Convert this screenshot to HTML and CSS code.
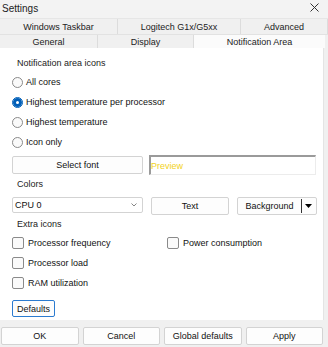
FILE: index.html
```html
<!DOCTYPE html>
<html>
<head>
<meta charset="utf-8">
<link rel="stylesheet" href="styles.css">
</head>
<body>
<div class="window">
  <div class="titlebar">
    <span class="title">Settings</span>
    <svg class="close" width="9" height="9" viewBox="0 0 9 9"><path d="M0.5 0.5 L8.5 8.5 M8.5 0.5 L0.5 8.5" stroke="#333" stroke-width="1" fill="none"/></svg>
  </div>
  <div class="tabs">
    <div class="tabrow row1">
      <div class="tab">Windows Taskbar</div>
      <div class="tab">Logitech G1x/G5xx</div>
      <div class="tab">Advanced</div>
    </div>
    <div class="tabrow row2">
      <div class="tab">General</div>
      <div class="tab">Display</div>
      <div class="tab selected">Notification Area</div>
    </div>
  </div>
  <div class="panel">
    <div class="group-label">Notification area icons</div>
    <div class="opt"><span class="radio"></span><span>All cores</span></div>
    <div class="opt"><span class="radio checked"></span><span>Highest temperature per processor</span></div>
    <div class="opt"><span class="radio"></span><span>Highest temperature</span></div>
    <div class="opt"><span class="radio"></span><span>Icon only</span></div>
    <div class="font-row">
      <div class="btn font-btn">Select font</div>
      <div class="preview">Preview</div>
    </div>
    <div class="group-label colors-label">Colors</div>
    <div class="color-row">
      <div class="combo"><span>CPU 0</span><svg width="6" height="4" viewBox="0 0 6 4"><path d="M0.5 0.5 L3 3 L5.5 0.5" stroke="#777" stroke-width="0.9" fill="none"/></svg></div>
      <div class="btn text-btn">Text</div>
      <div class="btn bg-btn"><span class="bg-label">Background</span><span class="divider"></span><svg width="7" height="4" viewBox="0 0 7 4"><path d="M0 0 L7 0 L3.5 4 Z" fill="#000"/></svg></div>
    </div>
    <div class="group-label extra-label">Extra icons</div>
    <div class="checks">
      <div class="opt"><span class="check"></span><span>Processor frequency</span></div>
      <div class="opt"><span class="check"></span><span>Power consumption</span></div>
      <div class="opt"><span class="check"></span><span>Processor load</span></div>
      <div class="opt"></div>
      <div class="opt"><span class="check"></span><span>RAM utilization</span></div>
    </div>
    <div class="btn defaults">Defaults</div>
  </div>
  <div class="footer">
    <div class="btn">OK</div>
    <div class="btn">Cancel</div>
    <div class="btn">Global defaults</div>
    <div class="btn">Apply</div>
  </div>
</div>
</body>
</html>
```
FILE: styles.css
```css
html, body {
  margin: 0;
  padding: 0;
}
body {
  width: 328px;
  height: 347px;
  overflow: hidden;
  background: #f0f0f0;
  font-family: "Liberation Sans", Arial, sans-serif;
  font-size: 9px;
  color: #111;
}
.window {
  display: flex;
  flex-direction: column;
  height: 347px;
}
.titlebar {
  height: 18px;
  display: flex;
  align-items: center;
  justify-content: space-between;
  padding: 0 9px 0 2px;
  background: #f3f3f3;
}
.title {
  font-size: 10px;
  color: #222;
  margin-top: -2px;
}
.close {
  margin-top: -3px;
}
.tabs {
  display: flex;
  flex-direction: column;
  border-top: 1px solid #e6e6e6;
}
.tabrow {
  display: grid;
  height: 15px;
}
.row1 {
  grid-template-columns: 118px 123px 1fr;
  border-bottom: 1px solid #e2e2e2;
}
.row2 {
  grid-template-columns: 98px 96px 1fr;
  height: 13px;
}
.tab {
  display: flex;
  align-items: center;
  justify-content: center;
  background: #f0f0f0;
  border-right: 1px solid #dcdcdc;
  color: #222;
}
.tab.selected {
  background: #fbfbfb;
  border-right: none;
  margin-right: 3px;
}
.panel {
  background: #fff;
  width: 324px;
  height: 272px;
  box-sizing: border-box;
  border-right: 1px solid #e4e4e4;
  padding: 6px 0 0 12px;
  display: flex;
  flex-direction: column;
}
.group-label {
  height: 18px;
  line-height: 18px;
  margin-left: 5px;
  color: #222;
}
.opt {
  height: 20px;
  display: flex;
  align-items: center;
  gap: 3px;
}
.radio {
  width: 9px;
  height: 9px;
  border: 1px solid #8a8a8a;
  border-radius: 50%;
  background: #fafafa;
  box-sizing: content-box;
  flex: none;
}
.radio.checked {
  border-color: #005fb8;
  background: #fff;
  box-shadow: inset 0 0 0 3px #005fb8;
}
.check {
  width: 10px;
  height: 10px;
  border: 1px solid #8a8a8a;
  border-radius: 2px;
  background: #fafafa;
  flex: none;
  margin-right: 1px;
}
.btn {
  display: flex;
  align-items: center;
  justify-content: center;
  background: #fdfdfd;
  border: 1px solid #d3d3d3;
  border-radius: 2px;
  box-sizing: border-box;
  color: #111;
}
.font-row {
  display: flex;
  margin-top: 3px;
  height: 20px;
}
.font-btn {
  width: 131px;
  height: 18px;
  margin-top: 1px;
}
.preview {
  margin-left: 6px;
  width: 167px;
  height: 20px;
  box-sizing: border-box;
  border-top: 2px solid #9a9a9a;
  border-left: 2px solid #9a9a9a;
  border-right: 1px solid #ececec;
  border-bottom: 1px solid #ececec;
  color: #f2d21a;
  padding-left: 0;
  display: flex;
  align-items: center;
}
.colors-label {
  margin-top: 0;
}
.color-row {
  display: flex;
  margin-top: 4px;
  height: 18px;
}
.combo {
  width: 131px;
  height: 16px;
  box-sizing: border-box;
  border: 1px solid #d3d3d3;
  border-radius: 2px;
  display: flex;
  align-items: center;
  justify-content: space-between;
  padding: 0 5px 0 2px;
  background: #fff;
}
.text-btn {
  margin-left: 8px;
  width: 78px;
  height: 18px;
}
.bg-btn {
  margin-left: 8px;
  width: 80px;
  height: 18px;
  justify-content: flex-start;
  padding-right: 4px;
}
.bg-label {
  flex: 1;
  text-align: center;
}
.divider {
  width: 1px;
  height: 14px;
  background: #333;
  margin-right: 3px;
}
.extra-label {
  margin-top: 0;
}
.checks {
  display: grid;
  grid-template-columns: 155px 1fr;
}
.defaults {
  margin-top: 7px;
  width: 43px;
  height: 17px;
  border-color: #2b7bd0;
}
.footer {
  display: grid;
  grid-template-columns: repeat(4, 1fr);
  gap: 4px;
  width: 322px;
  margin: 7px 0 0 1px;
}
.footer .btn {
  height: 18px;
}
```
